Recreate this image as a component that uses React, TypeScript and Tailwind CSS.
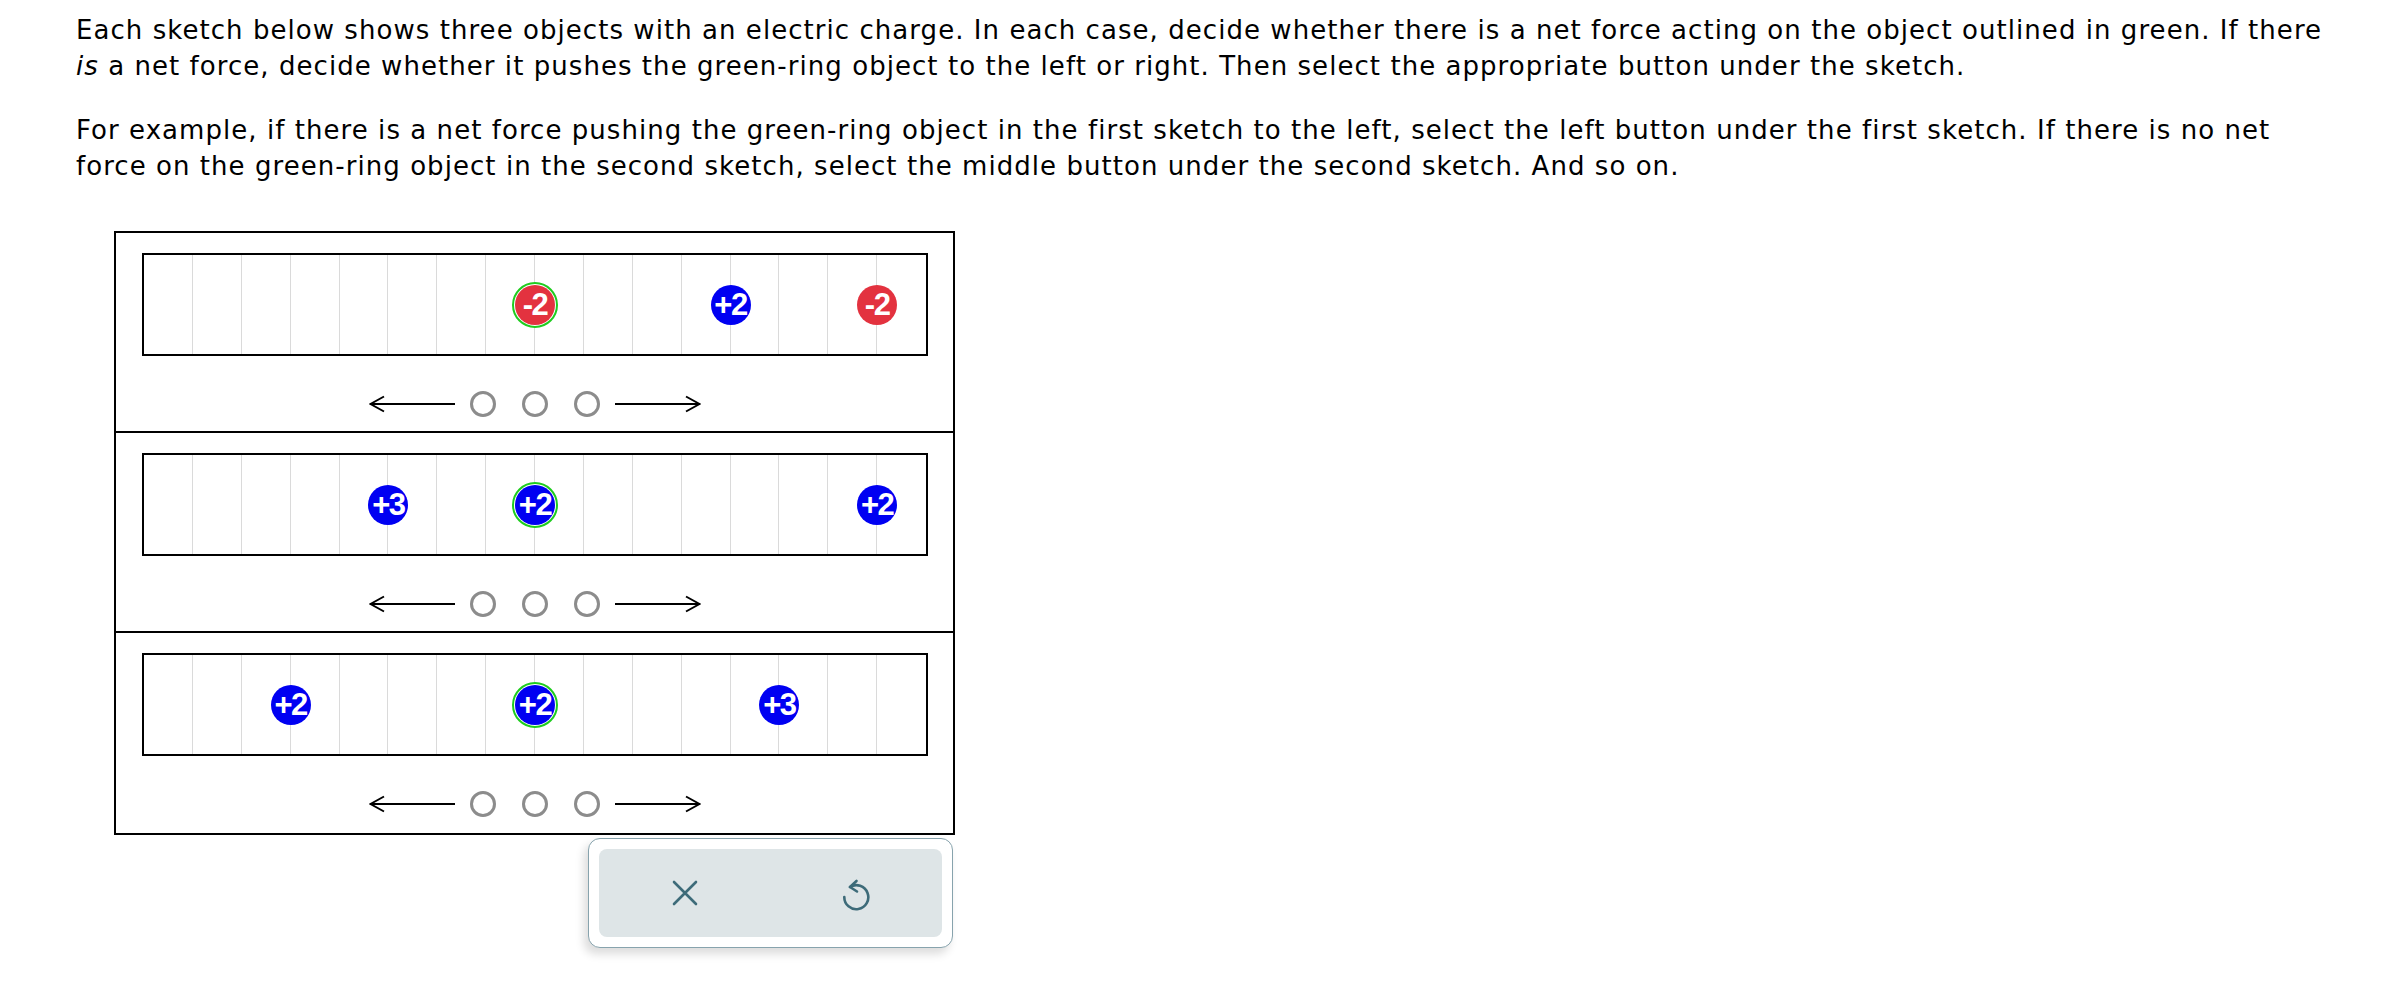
import React from "react";

type Charge = { pos: number; value: string; ring?: boolean };

const sketches: Charge[][] = [
  [
    { pos: 8, value: "-2", ring: true },
    { pos: 12, value: "+2" },
    { pos: 15, value: "-2" },
  ],
  [
    { pos: 5, value: "+3" },
    { pos: 8, value: "+2", ring: true },
    { pos: 15, value: "+2" },
  ],
  [
    { pos: 3, value: "+2" },
    { pos: 8, value: "+2", ring: true },
    { pos: 13, value: "+3" },
  ],
];

const ChargeDot = ({ charge }: { charge: Charge }) => {
  const color = charge.value.startsWith("-") ? "bg-[#e3323f]" : "bg-[#0000f2]";
  const dot = (
    <div
      className={`${color} w-[40px] h-[40px] rounded-full flex items-center justify-center text-white font-bold text-[31px] leading-none tracking-[-1.5px]`}
      style={{ fontFamily: '"Liberation Sans", Arial, sans-serif' }}
    >
      {charge.value}
    </div>
  );
  return (
    <div
      className="absolute top-1/2 -translate-x-1/2 -translate-y-1/2"
      style={{ left: `${(charge.pos / 16) * 100}%` }}
    >
      {charge.ring ? (
        <div className="rounded-full border-2 border-[#1fcc1f] p-px bg-white">{dot}</div>
      ) : (
        dot
      )}
    </div>
  );
};

const Arrow = ({ right }: { right?: boolean }) => (
  <svg width="86" height="20" viewBox="0 0 86 20" className={right ? "rotate-180" : ""}>
    <path d="M1.5 10H86M15 2.5L1.5 10L15 17.5" fill="none" stroke="#000" strokeWidth="2" />
  </svg>
);

const Sketch = ({ charges, last }: { charges: Charge[]; last: boolean }) => (
  <div className={`h-[200px] pl-[26px] pr-[25px] pt-[20px] ${last ? "" : "border-b-2 border-black"}`}>
    <div className="relative h-[103px] border-2 border-black">
      <div className="grid grid-cols-16 h-full">
        {Array.from({ length: 16 }).map((_, i) => (
          <div key={i} className={i < 15 ? "border-r border-[#dadada]" : ""} />
        ))}
      </div>
      {charges.map((c, i) => (
        <ChargeDot key={i} charge={c} />
      ))}
    </div>
    <div className="mt-[35px] flex items-center justify-center gap-[15px]">
      <Arrow />
      <div className="flex items-center gap-[26px]">
        {[0, 1, 2].map((i) => (
          <div key={i} className="w-[26px] h-[26px] rounded-full border-[3px] border-[#8c8c8c]" />
        ))}
      </div>
      <Arrow right />
    </div>
  </div>
);

export default function App() {
  return (
    <div
      className="w-[2383px] h-[988px] bg-white text-black"
      style={{ fontFamily: '"DejaVu Sans", Verdana, sans-serif' }}
    >
      <div className="pl-[76px] pt-[12px] w-[2340px] text-[26px] leading-[36px] tracking-[1.05px]">
        <p>
          Each sketch below shows three objects with an electric charge. In each case, decide whether there is a
          net force acting on the object outlined in green. If there <em>is</em> a net force, decide whether it
          pushes the green-ring object to the left or right. Then select the appropriate button under the sketch.
        </p>
        <p className="mt-[28px]">
          For example, if there is a net force pushing the green-ring object in the first sketch to the left, select
          the left button under the first sketch. If there is no net force on the green-ring object in the second
          sketch, select the middle button under the second sketch. And so on.
        </p>
      </div>

      <div className="ml-[114px] mt-[47px] w-[841px] border-2 border-black">
        {sketches.map((s, i) => (
          <Sketch key={i} charges={s} last={i === sketches.length - 1} />
        ))}
      </div>

      <div className="ml-[588px] mt-[3px] w-[365px] h-[110px] rounded-[12px] border-[1.5px] border-[#87a3ad] bg-white p-[10px] shadow-[-4px_6px_10px_rgba(0,0,0,0.14)]">
        <div className="flex h-full rounded-[8px] bg-[#dee5e7]">
          <button className="flex-1 flex items-center justify-center">
            <svg width="26" height="26" viewBox="0 0 26 26">
              <path d="M2 2L24 24M24 2L2 24" stroke="#3d6b79" strokeWidth="2.6" strokeLinecap="round" />
            </svg>
          </button>
          <button className="flex-1 flex items-center justify-center">
            <svg width="30" height="32" viewBox="0 0 30 32" className="mt-[4px]">
              <path
                d="M9 8A12 12 0 1 1 3.3 18"
                fill="none"
                stroke="#3d6b79"
                strokeWidth="2.6"
                strokeLinecap="round"
              />
              <path
                d="M15.5 2L9 8L16 12.5"
                fill="none"
                stroke="#3d6b79"
                strokeWidth="2.6"
                strokeLinecap="round"
                strokeLinejoin="round"
              />
            </svg>
          </button>
        </div>
      </div>
    </div>
  );
}
